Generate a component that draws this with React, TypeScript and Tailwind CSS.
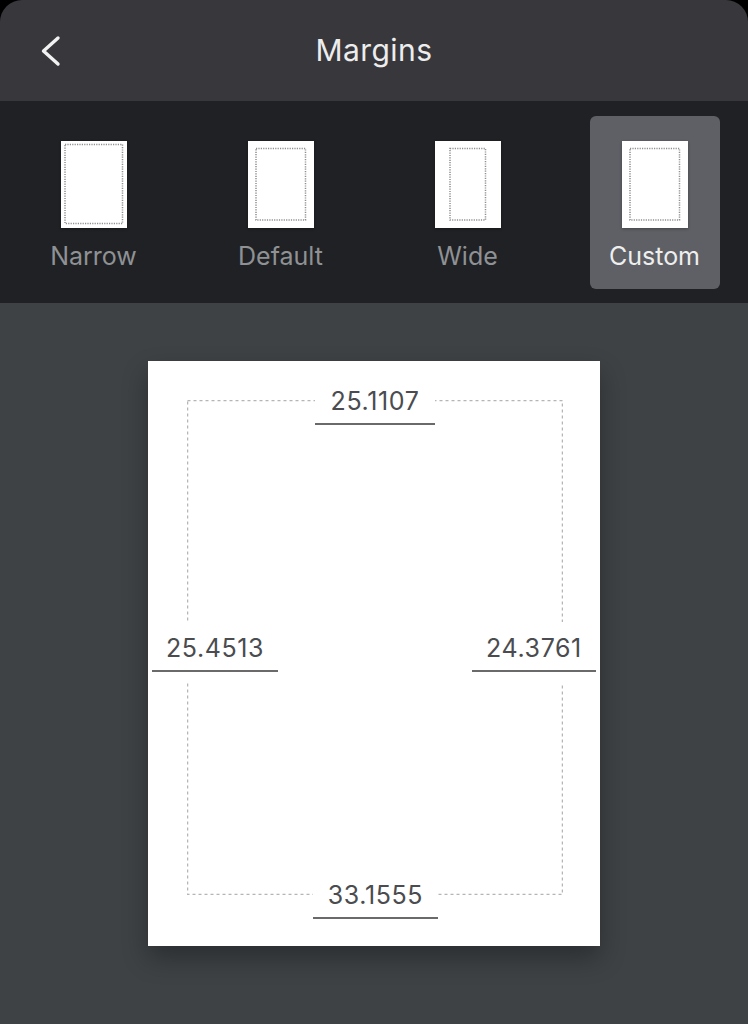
import React from 'react';

const PRESETS = [
  { label: 'Narrow', x: 4, y: 3.5, w: 57.5, h: 79 },
  { label: 'Default', x: 8, y: 7.5, w: 49.5, h: 71.5 },
  { label: 'Wide', x: 15, y: 7.5, w: 35.5, h: 71.5 },
  { label: 'Custom', x: 8, y: 7.5, w: 49.5, h: 71.5, active: true },
];

const MarginField = ({ value, className }: { value: string; className: string }) => (
  <div className={`absolute bg-white ${className}`}>
    <div className="border-b-2 border-[#6a6a6a] h-[50px] flex items-center justify-center pt-[4px] text-[25px] leading-none tracking-[0.6px] text-[#4a4c4f]">
      {value}
    </div>
  </div>
);

export default function App() {
  return (
    <div className="h-[1024px] bg-black overflow-hidden font-['Inter',sans-serif]">
      {/* Header */}
      <div className="h-[101px] bg-[#38383c] rounded-t-[22px] flex items-center justify-center relative">
        <svg className="absolute left-[40px] top-[35px]" width="22" height="32" viewBox="0 0 22 32" fill="none">
          <path d="M18 3 L3.5 16 L18 29" stroke="#f2f2f2" strokeWidth="3.4" strokeLinecap="round" strokeLinejoin="round" />
        </svg>
        <h1 className="text-[30px] leading-none tracking-[0.4px] text-[#ededee] mb-[2px]">Margins</h1>
      </div>

      {/* Preset picker */}
      <div className="h-[202px] bg-[#1f2124] grid grid-cols-4 pt-[15px]">
        {PRESETS.map(p => (
          <div key={p.label} className="flex justify-center">
            <div className={`w-[130px] h-[173px] rounded-[6px] flex flex-col items-center pt-[25px] ${p.active ? 'bg-[#5e6065]' : ''}`}>
              <div className="w-[66px] h-[87px] bg-white shadow-[0_1px_3px_rgba(0,0,0,0.3)]">
                <svg width="66" height="87" viewBox="0 0 66 87" fill="none">
                  <rect x={p.x} y={p.y} width={p.w} height={p.h} stroke="#8f8f8f" strokeWidth="1.5" strokeDasharray="1.2 1.2" />
                </svg>
              </div>
              <span className={`mt-[14px] text-[25px] leading-[28px] ${p.active ? 'text-[#eeeeef]' : 'text-[#8f9194]'}`}>
                {p.label}
              </span>
            </div>
          </div>
        ))}
      </div>

      {/* Page preview */}
      <div className="h-[721px] bg-[#3e4245] flex justify-center pt-[58px]">
        <div className="w-[452px] h-[585px] bg-white pt-[39px] pb-[51px] pl-[39px] pr-[38px] shadow-[0_12px_24px_rgba(0,0,0,0.3)]">
          <div className="relative h-full">
            <svg className="absolute inset-0" width="376" height="495" viewBox="0 0 376 495" fill="none">
              <rect x="0.5" y="0.5" width="375" height="494" stroke="#b5b5b5" strokeWidth="1.5" strokeDasharray="3 3" />
            </svg>
            <MarginField value="25.1107" className="w-[120px] left-[128px] top-[-25px]" />
            <MarginField value="25.4513" className="w-[126px] left-[-35px] top-[222px] pb-[11px]" />
            <MarginField value="24.3761" className="w-[124px] left-[285px] top-[222px] pb-[11px]" />
            <MarginField value="33.1555" className="w-[125px] left-[126px] top-[469px]" />
          </div>
        </div>
      </div>
    </div>
  );
}
